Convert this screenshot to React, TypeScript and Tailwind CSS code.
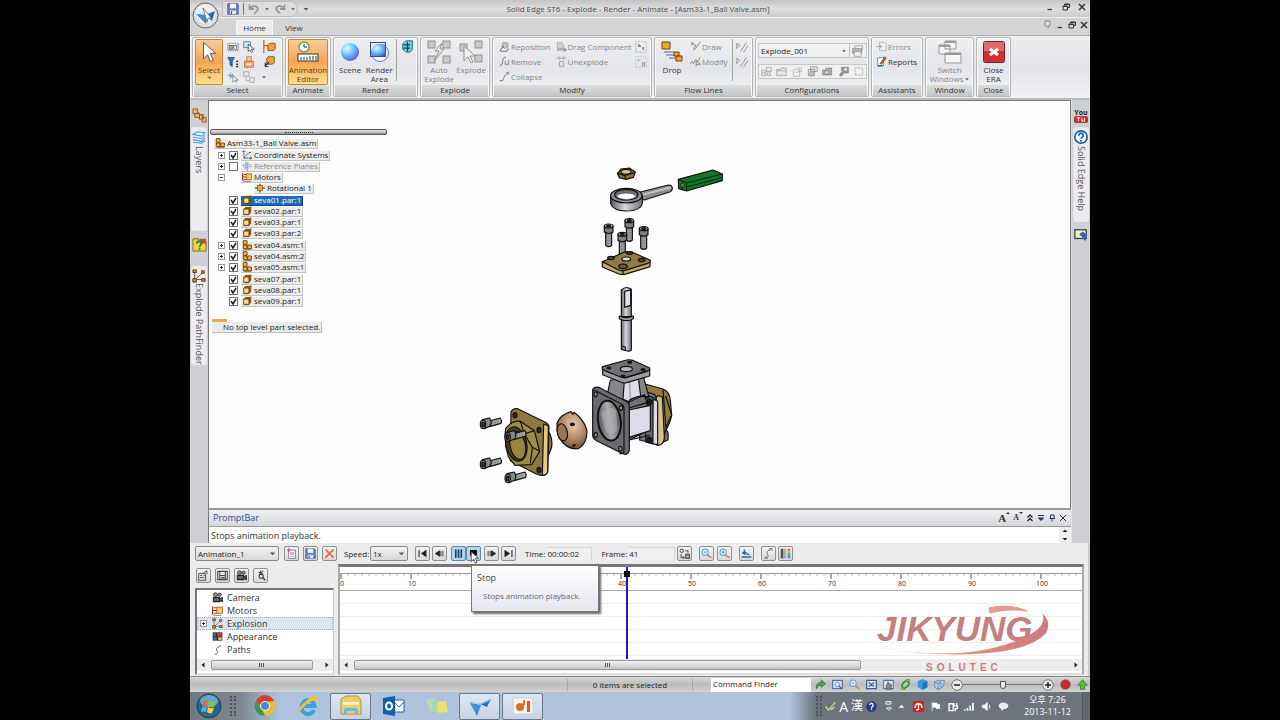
import type { ReactNode } from "react";

// Every small glyph is drawn on a 16x16 grid
function Icon({ size = 11, children }: { size?: number; children: ReactNode }) {
  return (
    <svg width={size} height={size} viewBox="0 0 16 16" fill="none" className="shrink-0" aria-hidden="true">
      {children}
    </svg>
  );
}

const icons: Record<string, ReactNode> = {
  arrow: <path d="M4 1v12l3-3 2 5 2-1-2-5h4z" fill="#fff" stroke="#444" />,
  selectBox: (
    <>
      <rect x="1" y="3" width="14" height="10" stroke="#3f74a8" strokeDasharray="2 1" />
      <rect x="3" y="6" width="4" height="5" fill="#e7a13d" stroke="#555" />
      <rect x="9" y="6" width="4" height="5" fill="#fff" stroke="#555" />
    </>
  ),
  selectArrow: (
    <>
      <rect x="1" y="1" width="9" height="8" fill="#cfe3f4" stroke="#39699a" />
      <path d="M7 4v10l2-2 2 3 2-1-2-3h4z" fill="#fff" stroke="#333" />
    </>
  ),
  relate: (
    <>
      <path d="M1 0v16M1 7h5" stroke="#d05a1c" strokeWidth="1.5" />
      <path d="M6 6l2-2h7v7l-2 2H6z" fill="#f0a437" stroke="#7a4a10" />
    </>
  ),
  filter: (
    <>
      <path d="M1 2h9L7 7v7l-3-2V7z" fill="#2c78b8" stroke="#1d4d78" />
      <path d="M12 7h3M12 11h3M12 14h3" stroke="#444" strokeWidth="2" />
    </>
  ),
  person: (
    <>
      <rect x="5" y="1" width="6" height="6" fill="#f8c6a0" stroke="#c4622b" />
      <rect x="2" y="7" width="12" height="8" fill="#f3a977" stroke="#c4622b" />
      <path d="M5 11h6" stroke="#fff" strokeWidth="2" />
    </>
  ),
  pin: (
    <>
      <path d="M5 3l2-2h8v8l-3 2H5z" fill="#f0a437" stroke="#5e3b10" />
      <path d="M8 8l-5 5M3 9v5h4" stroke="#333" strokeWidth="1.5" />
    </>
  ),
  move: (
    <>
      <path d="M1 6h8M5 2v8M3 4l5 5M3 10l5-6" stroke="#888" />
      <path d="M8 6v9l2-2 2 2 1-1-2-2h4z" fill="#f4f4f4" stroke="#777" />
    </>
  ),
  swap: (
    <>
      <rect x="1" y="1" width="7" height="6" fill="#e4e4e4" stroke="#999" />
      <rect x="9" y="9" width="6" height="6" fill="#e4e4e4" stroke="#999" />
      <path d="M4 9v4h4" stroke="#999" />
    </>
  ),
  caret: <path d="M3 6h10l-5 5z" fill="#555" />,
  motion: (
    <>
      <path d="M2 5l4-4h8v11l-3 3H6l-4-4z" fill="#6fd0d4" stroke="#145c63" />
      <path d="M3 6h8M3 10h8M8 2v12" stroke="#123f4c" strokeWidth="1.4" />
    </>
  ),
  reposition: (
    <>
      <path d="M6 2l7 1v6l-4 2-5-3z" fill="#c4c4c4" stroke="#8d8d8d" />
      <path d="M1 14l6-7M2 15h9l3-4" stroke="#777" strokeWidth="1.5" />
    </>
  ),
  remove: <path d="M1 15l4-4 1-7 4-3M9 7v5h5V6" stroke="#8a8a8a" strokeWidth="1.5" />,
  collapse: <path d="M1 14h4l4-8 3-1 2-4M10 2l5 2" stroke="#8a8a8a" strokeWidth="1.5" />,
  drag: (
    <>
      <path d="M2 2h6l3 4v5H2z" fill="#d2d2d2" stroke="#999" />
      <path d="M1 13h14M11 10l4 3-4 2" stroke="#888" strokeWidth="1.5" />
    </>
  ),
  unexplode: <path d="M1 3h6M9 3h6M4 1l3 2-3 2M12 1L9 3l3 2M5 8h6v7H5z" stroke="#8a8a8a" />,
  dashed: (
    <>
      <rect x="1" y="1" width="14" height="14" stroke="#999" strokeDasharray="2 1.5" />
      <path d="M5 4v3h3M11 12V8" stroke="#888" strokeWidth="2" />
    </>
  ),
  dashed2: (
    <>
      <rect x="1" y="1" width="14" height="14" stroke="#bbb" strokeDasharray="3 2" />
      <path d="M5 4v3M10 9h3v4h-3z" stroke="#999" strokeWidth="1.5" />
    </>
  ),
  draw: <path d="M1 3h3l2 3h3l-3 4v4M15 1l-6 9-2 1M2 7l3-5" stroke="#848484" strokeWidth="1.4" />,
  modify: <path d="M0 12l3-4 2 3 3-6 3 3 4-6M9 7v7l2-2h4z" stroke="#808080" strokeWidth="1.4" />,
  slashes: <path d="M1 3l4 3-4 4zM6 14l8-12M10 15l6-9" stroke="#949494" strokeWidth="1.3" />,
  errors: (
    <>
      <path d="M5 2h8l2 2v10H5z" fill="#eee" stroke="#aaa" />
      <path d="M0 8h7M5 6l3 2-3 2" stroke="#aaa" strokeWidth="1.5" />
    </>
  ),
  reports: (
    <>
      <path d="M2 3l9-1v12l-8 1z" fill="#fff" stroke="#356a9b" />
      <path d="M6 11L13 1l2 2-7 9z" fill="#e0713e" stroke="#333" />
      <path d="M2 14h8" stroke="#2573b3" strokeWidth="2" />
    </>
  ),
  printer: (
    <>
      <rect x="4" y="1" width="10" height="5" stroke="#999" fill="#eee" />
      <rect x="1" y="5" width="12" height="6" fill="#b5b5b5" stroke="#888" />
      <rect x="3" y="9" width="9" height="6" fill="#f4f4f4" stroke="#999" />
    </>
  ),
  cfgGrid: <path d="M1 6h6v8H1zM8 2h7v6H8zM9 10h5v4H9zM1 10h6" stroke="#999" fill="#e8e8e8" />,
  cfgFolder: <path d="M1 5h6l1-2h7v11H1zM1 7h14" stroke="#999" fill="#e4e4e4" />,
  cfgNew: <path d="M2 5h9v10H2zM8 3h6v5H9M5 9h4" stroke="#aaa" fill="#f1f1f1" />,
  cfgCopy: <path d="M5 1h10v7H5zM2 5h9v9H2zM4 10h5v4H4z" stroke="#888" fill="#ddd" />,
  cfgCam: (
    <>
      <path d="M1 6h4l1-3h8v10H1z" fill="#b0b0b0" stroke="#777" />
      <circle cx="7" cy="9" r="2.5" fill="#eee" stroke="#666" />
    </>
  ),
  cfgKey: (
    <>
      <path d="M5 2h10v8h-6l-4 5-3-2 4-5z" fill="#999" stroke="#777" />
      <circle cx="11" cy="5" r="2" fill="#eee" />
    </>
  ),
  cfgRect: <rect x="3" y="3" width="11" height="10" stroke="#999" strokeDasharray="3 1" />,
  floppy: (
    <>
      <path d="M1 1h13l1 2v12H1z" fill="#6f82c4" stroke="#3a4a8a" />
      <rect x="4" y="1" width="8" height="6" fill="#f2f4fb" />
      <rect x="4" y="10" width="8" height="5" fill="#dfe4f4" />
      <path d="M6 11v4" stroke="#3a4a8a" strokeWidth="1.5" />
    </>
  ),
  undo: <path d="M2 2v6h6M3 7c4-5 10-3 10 1 0 3-3 4-5 7" stroke="#979797" strokeWidth="2.4" />,
  redo: <path d="M14 2v6H8M13 7C9 2 3 4 3 8c0 3 3 3 5 6" stroke="#979797" strokeWidth="2.4" />,
  asm: (
    <>
      <path d="M2 1h6v6H2zM2 8h6v6H2zM9 8h6v6H9z" fill="#f6b64c" stroke="#6b3f08" strokeWidth="1.5" />
      <path d="M3 15h12" stroke="#6b3f08" />
    </>
  ),
  part: (
    <>
      <path d="M1 15l2-3M13 1h2v2" stroke="#c98a3a" />
      <path d="M3 5l3-3h8v8l-3 4H3z" fill="#8a560f" stroke="#5f3a08" />
      <rect x="3" y="5" width="8" height="8" fill="#ffe08a" stroke="#5f3a08" />
    </>
  ),
  coord: <path d="M3 1v12h12M3 13L11 4M1 3l2-2 2 2M11 4h3M13 11l3 2-3 2" stroke="#333" strokeWidth="1.4" strokeDasharray="3 1" />,
  plane: <path d="M6 1l3 2v12l-3-2zM1 7l10-2 4 3-10 3z" fill="#d8e8f6" stroke="#6a92b8" />,
  motor: (
    <>
      <path d="M1 2v12M1 8h6M3 4h4M3 12h4" stroke="#9a2c1c" strokeWidth="1.8" />
      <rect x="7" y="3" width="8" height="9" fill="#ffc65a" stroke="#8a4d12" />
      <path d="M2 15h12" stroke="#7d2f5a" />
    </>
  ),
  rotational: (
    <>
      <path d="M0 8h16M8 1v14" stroke="#6b3f08" strokeWidth="2" />
      <rect x="4" y="4" width="8" height="8" fill="#f2a93c" stroke="#6b3f08" />
    </>
  ),
  asmStack: (
    <>
      <path d="M1 1h5v5H1zM3 6h5v4H3zM8 7h4v5H8zM11 10h4v5h-4z" fill="#efbf68" stroke="#8a5a1a" />
      <path d="M6 4l6 6" stroke="#8a5a1a" />
    </>
  ),
  layers: <path d="M1 5l5-3 9 1-4 4zM1 8l10 2 4-4M1 11l10 2 4-4M1 14l10 1 4-3" stroke="#4c9bd6" fill="#eaf4fc" strokeWidth="1.2" />,
  folderHelp: (
    <>
      <path d="M1 2h6v3h8v10H1z" fill="#f0d33f" stroke="#7a6a20" />
      <rect x="8" y="2" width="7" height="5" fill="#c94a3b" />
      <path d="M5 7c0-3 5-3 5 0 0 2-2 2-2 4M8 12v2" stroke="#248a3c" strokeWidth="1.8" />
    </>
  ),
  explode: (
    <>
      <path d="M3 3v9h9M4 12l8-8" stroke="#555" />
      <path d="M1 1h4v3H1zM11 2h3v3h-3zM1 11h4v4H1zM11 11h4v3h-4z" fill="#e28a35" stroke="#5a2e0c" />
    </>
  ),
  youtube: (
    <>
      <text x="8" y="7" fontSize="8" fontWeight="bold" textAnchor="middle" fill="#222">You</text>
      <rect x="0" y="8" width="16" height="8" rx="2" fill="#c8312b" />
      <path d="M3 10h4M5 10v4M9 10v4h3v-4" stroke="#fff" />
    </>
  ),
  help: (
    <>
      <circle cx="8" cy="8" r="7" fill="#fff" stroke="#1f66ad" strokeWidth="2" />
      <path d="M5.5 6.5c0-4 5-3.5 5 0 0 2-2.5 1.5-2.5 3.5M8 11.5v2" stroke="#1f66ad" strokeWidth="2" />
    </>
  ),
  monitor: (
    <>
      <rect x="1" y="2" width="13" height="10" fill="#e9efc9" stroke="#444" strokeWidth="1.5" />
      <path d="M6 7l4-3 5 4-2 7-3-4z" fill="#2c6bb4" />
    </>
  ),
  newAnim: (
    <>
      <rect x="4" y="3" width="10" height="12" fill="#fff" stroke="#6a5a7d" />
      <path d="M6 7h6M6 9h6M6 12h6" stroke="#7060a0" />
      <path d="M1 3h6M4 0v6" stroke="#d46" strokeWidth="1.5" />
    </>
  ),
  redX: <path d="M2 2l12 12M14 2L2 14" stroke="#ea6b45" strokeWidth="2.6" />,
  first: <path d="M3 3v10M13 4L7 8l6 4z" fill="#222" stroke="#222" strokeWidth="1.5" />,
  prev: <path d="M8 4L2 8l6 4zM10 4v8M13 4v8" fill="#222" stroke="#222" strokeWidth="1.2" />,
  pause: <path d="M4 2v12M8 2v12M12 2v12" stroke="#153f6b" strokeWidth="2.4" />,
  stop: <rect x="3" y="3" width="10" height="8" fill="#000" />,
  next: <path d="M8 4l6 4-6 4zM6 4v8M3 4v8" fill="#222" stroke="#222" strokeWidth="1.2" />,
  last: <path d="M13 3v10M3 4l6 4-6 4z" fill="#222" stroke="#222" strokeWidth="1.5" />,
  props: <path d="M1 5h10v10H1zM8 4l5-3v5M3 8h3M3 11h6M8 8h2" stroke="#444" strokeWidth="1.3" />,
  film: <path d="M1 2h14v12H1zM4 2v12M12 2v12M4 8h8M7 11h3v3H7z" stroke="#444" strokeWidth="1.5" />,
  camera: (
    <>
      <circle cx="5" cy="4" r="3" fill="#888" stroke="#222" />
      <circle cx="11" cy="4" r="2.5" fill="#888" stroke="#222" />
      <path d="M2 8h9v6H2zM11 10l4-2v6l-4-2" fill="#666" stroke="#222" strokeWidth="1.5" />
    </>
  ),
  inspect: (
    <>
      <path d="M5 3l7 3M12 1L6 7M8 1v4" stroke="#444" strokeWidth="1.5" />
      <circle cx="9" cy="9" r="3" stroke="#444" strokeWidth="1.5" />
      <path d="M11 11l4 4" stroke="#444" strokeWidth="2" />
    </>
  ),
  appearance: (
    <>
      <rect x="1" y="2" width="14" height="12" fill="#222" />
      <path d="M2 3h4v5H2z" fill="#31843a" />
      <path d="M7 3h7v5H7z" fill="#d8362d" />
      <path d="M2 9h5v4H2z" fill="#5a5ad0" />
      <path d="M9 9h5v4H9z" fill="#e4cf3c" />
    </>
  ),
  path: <path d="M4 15c9-1 0-6 3-9 2-3 4-1 6-4" stroke="#555" strokeWidth="1.3" />,
  exportClip: (
    <>
      <circle cx="4" cy="4" r="2.5" stroke="#333" strokeWidth="1.3" />
      <path d="M9 4h4v3M3 9v5h4M6 12l2 2-2 2" stroke="#333" strokeWidth="1.3" />
      <path d="M10 9h5v6h-5z" stroke="#333" fill="#bbb" strokeWidth="1.5" />
    </>
  ),
  zoomOut: (
    <>
      <circle cx="6" cy="6" r="4.5" fill="#dff0ff" stroke="#5b9bd0" strokeWidth="1.5" />
      <path d="M4 6h4" stroke="#357" />
      <path d="M9 10l6 4" stroke="#d47b4a" strokeWidth="2.4" />
    </>
  ),
  zoomIn: (
    <>
      <circle cx="6" cy="6" r="4.5" fill="#dff0ff" stroke="#5b9bd0" strokeWidth="1.5" />
      <path d="M4 6h4M6 4v4" stroke="#357" />
      <path d="M9 10l6 4" stroke="#d47b4a" strokeWidth="2.4" />
    </>
  ),
  download: <path d="M1 13h14M5 2v6M2 6l3 3 3-3M8 9h4" stroke="#2f66a8" strokeWidth="2.2" />,
  curveS: <path d="M2 13c12 2 0-6 5-9 2-2 5-1 7-1M2 15h5M9 1h5" stroke="#666" strokeWidth="1.3" />,
  spectrum: (
    <>
      <rect x="1" y="1" width="4" height="14" fill="#555" />
      <rect x="5" y="1" width="4" height="14" fill="#aaa" />
      <path d="M11 1h4v3h-4z" fill="#e55" />
      <path d="M11 4h4v3h-4z" fill="#ea3" />
      <path d="M11 7h4v3h-4z" fill="#4b5" />
      <path d="M11 10h4v5h-4z" fill="#58d" />
    </>
  ),
  refresh: <path d="M2 14c-1-7 3-9 7-9V1l6 6-6 5V9c-3 0-5 1-7 5z" fill="#4aa84a" stroke="#1d5f2a" />,
  zoomArea: (
    <>
      <rect x="1" y="2" width="14" height="12" fill="#cfe2f6" stroke="#3468a8" strokeWidth="1.5" />
      <circle cx="8" cy="8" r="3" fill="#fff" stroke="#3468a8" />
      <path d="M10 10l4 4" stroke="#3468a8" strokeWidth="2" />
    </>
  ),
  fit: <path d="M1 2h14v12H1zM4 5l8 6M12 5l-8 6" stroke="#2c5c98" fill="#dce9f8" strokeWidth="1.7" />,
  pan: (
    <>
      <path d="M1 2h14v12H1z" stroke="#4a78ac" fill="#dce9f8" strokeWidth="1.5" />
      <path d="M5 15V8l2-1V4l2 3 3 1v7z" fill="#8c8c8c" stroke="#444" />
    </>
  ),
  rotate: (
    <>
      <ellipse cx="8" cy="8" rx="6" ry="4" stroke="#2a9a3a" strokeWidth="2.5" transform="rotate(-45 8 8)" />
      <path d="M9 0l5 1-2 4zM7 16l-5-1 2-4z" fill="#d7d23a" stroke="#3a7a1a" />
    </>
  ),
  blueCube: (
    <>
      <path d="M8 0l7 3v9l-7 4-7-4V3z" fill="#3e9ae2" />
      <path d="M8 6l7-3v9l-7 4z" fill="#1f74c0" />
    </>
  ),
  viewCube: <path d="M1 4l5-2 4 3v9l-4 1-5-3zM6 7v8M1 4l5 3 4-2M8 2h7l-1 8-4 3" stroke="#44719f" fill="#b5cfe8" />,
  up: <path d="M8 1l7 8h-4v6H5V9H1z" fill="#50c235" stroke="#1f7a18" />,
};

function G({ name, size }: { name: string; size?: number }) {
  return <Icon size={size}>{icons[name]}</Icon>;
}

function Group({ label, width, children }: { label: string; width: string; children: ReactNode }) {
  return (
    <section
      className={`${width} flex shrink-0 flex-col overflow-hidden rounded-xs border border-[#b4b5b7] bg-linear-to-b from-[#efeff0] via-[#e3e5e9] to-[#f3f3f4] shadow-[inset_0_0_0_1px_#fafafa]`}
    >
      <div className="flex min-h-0 flex-1 px-0.5 pt-px">{children}</div>
      <h2 className="mx-px h-[11px] shrink-0 bg-linear-to-b from-[#dcdddd] to-[#c4c5c6] text-center text-[8px] leading-[10px] text-[#333]">
        {label}
      </h2>
    </section>
  );
}

function SmallButton({ icon, label, muted = true }: { icon: string; label: string; muted?: boolean }) {
  return (
    <button
      className={`flex h-[15px] items-center gap-px whitespace-nowrap text-[8px] ${muted ? "text-[#868686]" : "text-[#333]"}`}
    >
      <G name={icon} />
      {label}
    </button>
  );
}

function IconButton({ icon, label, size = 12 }: { icon: string; label: string; size?: number }) {
  return (
    <button aria-label={label} className="grid h-[15px] w-4 place-items-center">
      <G name={icon} size={size} />
    </button>
  );
}

function BigButton({ label, children, className = "" }: { label: ReactNode; children: ReactNode; className?: string }) {
  return (
    <button className={`flex h-[46px] flex-col items-center rounded-xs text-center text-[8px] leading-[9px] ${className}`}>
      <span className="grid h-[26px] shrink-0 place-items-center">{children}</span>
      {label}
    </button>
  );
}

function QuickAccess() {
  return (
    <div className="ml-8 flex h-4 w-[76px] items-center gap-1 rounded-r-full border border-[#bdbdbd] bg-[#dedede] pl-1">
      <button aria-label="Save"><G name="floppy" size={12} /></button>
      <span className="h-3 w-px bg-[#777]" />
      <button aria-label="Undo"><G name="undo" size={12} /></button>
      <button aria-label="Undo list"><G name="caret" size={6} /></button>
      <button aria-label="Redo"><G name="redo" size={12} /></button>
      <button aria-label="Redo list"><G name="caret" size={6} /></button>
    </div>
  );
}

function WindowButtons() {
  return (
    <>
      <button aria-label="Minimize"><Icon size={8}><path d="M3 13h9" stroke="#333" strokeWidth="2.5" /></Icon></button>
      <button aria-label="Restore">
        <Icon size={8}><path d="M5 5V2h10v7h-4M2 6h9v8H2zM2 7h9M5 3h10" stroke="#333" strokeWidth="2" /></Icon>
      </button>
      <button aria-label="Close"><Icon size={8}><path d="M2 2l12 12M14 2L2 14" stroke="#333" strokeWidth="3" /></Icon></button>
    </>
  );
}

function TitleBar() {
  return (
    <header className="relative shrink-0 bg-[#d3d4d5]">
      <div className="flex h-[18px] items-center border-b border-[#f0f0f0] bg-linear-to-b from-[#c4c4c4] via-[#dedede] to-[#cccccc]">
        <div className="flex flex-1 items-center gap-1">
          <QuickAccess />
          <button aria-label="Customize toolbar"><G name="caret" size={8} /></button>
        </div>
        <h1 className="text-center text-[8px] text-[#4a4a4a]">
          Solid Edge ST6 - Explode - Render - Animate - [Asm33-1_Ball Valve.asm]
        </h1>
        <div className="flex flex-1 justify-end gap-2 pr-1 pb-1">
          <WindowButtons />
        </div>
      </div>
      <nav className="flex h-[17px] items-end pl-[46px] text-[8px] text-[#333]">
        <button className="h-[15px] w-[37px] rounded-t-xs border border-b-0 border-[#f8f8f8] bg-[#ececed]">Home</button>
        <button className="h-[15px] w-[42px]">View</button>
        <div className="mr-0.5 mb-1.5 ml-auto flex items-center gap-1">
          <button aria-label="Help">
            <Icon size={9}>
              <circle cx="8" cy="6" r="5" fill="#ddd" stroke="#999" strokeWidth="2" />
              <path d="M8 15l4-5" stroke="#999" strokeWidth="2" />
            </Icon>
          </button>
          <WindowButtons />
        </div>
      </nav>
      <button aria-label="Application menu" className="absolute top-0.5 left-0.5">
        <svg width="27" height="27" viewBox="0 0 27 27">
          <circle cx="13.5" cy="13.5" r="12.5" fill="#dcdddf" stroke="#666" />
          <circle cx="13.5" cy="12" r="10" fill="#f4f4f4" opacity=".8" />
          <path d="M4 12l12 1-2 9z" fill="#2f8fe0" />
          <path d="M13 13l10-4-3 10z" fill="#1d6cc0" />
          <path d="M11 6l9 11-4-1-1 4z" fill="#fff" stroke="#555" strokeWidth=".7" />
        </svg>
      </button>
    </header>
  );
}

function Ribbon() {
  return (
    <div className="flex h-[65px] shrink-0 gap-0.5 border-t border-[#a9aaac] bg-linear-to-b from-[#eeeeef] via-[#e2e4e8] to-[#f2f2f3] pt-px pb-[3px] pl-0.5 shadow-[inset_0_-2px_0_#b9babb]">
      <Group label="Select" width="w-[91px]">
        <BigButton
          className="w-7 bg-linear-to-b from-[#f8cd9c] via-[#f5a552] to-[#fde590] text-[#5a3a12] inset-ring inset-ring-[#c08a3a]"
          label={<>Select<G name="caret" size={7} /></>}
        >
          <Icon size={22}><path d="M4 1v12l3-3 2 5 2-1-2-5h4z" fill="#fff" stroke="#555" strokeWidth=".7" /></Icon>
        </BigButton>
        <div className="ml-0.5 grid h-[46px] grid-cols-2">
          <IconButton icon="selectBox" label="Box select" />
          <IconButton icon="selectArrow" label="Select tool" />
          <IconButton icon="filter" label="Filter" />
          <IconButton icon="person" label="Select component" />
          <IconButton icon="move" label="Move" />
          <IconButton icon="swap" label="Swap" />
        </div>
        <div className="flex flex-col pl-1">
          <IconButton icon="relate" label="Relate" size={13} />
          <IconButton icon="pin" label="Pin" />
          <button aria-label="More selection tools" className="flex h-[15px] items-center"><G name="caret" size={6} /></button>
        </div>
      </Group>
      <Group label="Animate" width="w-[46px]">
        <BigButton
          className="w-10 bg-linear-to-b from-[#f8cd9c] via-[#f5a552] to-[#fde590] text-[#5a3a12] inset-ring inset-ring-[#c08a3a]"
          label={<>Animation<br />Editor</>}
        >
          <svg width="22" height="22" viewBox="0 0 22 22" fill="none">
            <circle cx="7" cy="6" r="5" fill="#fff" stroke="#7d9a45" strokeWidth="1.5" />
            <path d="M7 3v3h3" stroke="#333" />
            <rect x="1" y="13" width="20" height="7" fill="#fff" stroke="#333" />
            <path d="M4 16v3M7 16v3M10 16v3M13 15v4M16 15v4M19 15v4" stroke="#245" />
          </svg>
        </BigButton>
      </Group>
      <Group label="Render" width="w-[85px]">
        <BigButton className="w-[29px] text-[#333]" label="Scene">
          <svg width="20" height="20" viewBox="0 0 20 20">
            <defs>
              <radialGradient id="sphere" cx=".35" cy=".3" r=".8">
                <stop offset="0" stopColor="#e8fbff" />
                <stop offset=".5" stopColor="#63bff5" />
                <stop offset="1" stopColor="#6a3fd0" />
              </radialGradient>
            </defs>
            <circle cx="10" cy="10" r="9" fill="url(#sphere)" />
          </svg>
        </BigButton>
        <BigButton className="w-[31px] text-[#333]" label={<>Render<br />Area</>}>
          <svg width="22" height="22" viewBox="0 0 22 22">
            <circle cx="12" cy="12" r="8.5" fill="#eef8ff" stroke="#5e7fd0" />
            <path d="M3.5 12a8.5 8.5 0 018.5-8.5h6V16H4.5z" fill="url(#sphere)" />
            <rect x="2.5" y="1.5" width="15" height="14" fill="none" stroke="#28588f" />
          </svg>
        </BigButton>
        <span className="mx-0.5 h-[42px] w-px bg-[#a5a5a5]" />
        <IconButton icon="motion" label="Motion" size={13} />
      </Group>
      <Group label="Explode" width="w-[70px]">
        <BigButton className="w-[33px] text-[#868686]" label={<>Auto<br />Explode</>}>
          <svg width="24" height="24" viewBox="0 0 24 24" fill="#c9c9c9" stroke="#909090">
            <rect x="1" y="1" width="7" height="7" /><rect x="16" y="1" width="7" height="7" />
            <rect x="1" y="16" width="7" height="7" /><rect x="16" y="16" width="7" height="7" />
            <path d="M15 3l-7 8h4l-4 9 9-11h-4z" fill="#eee" />
          </svg>
        </BigButton>
        <BigButton className="w-[33px] text-[#868686]" label="Explode">
          <svg width="24" height="24" viewBox="0 0 24 24" fill="#c9c9c9" stroke="#909090">
            <rect x="1" y="4" width="7" height="7" /><rect x="16" y="1" width="7" height="7" />
            <rect x="16" y="15" width="7" height="7" />
            <path d="M5 6v15l4-4 3 6 2-1-3-6h5z" fill="#f4f4f4" />
          </svg>
        </BigButton>
      </Group>
      <Group label="Modify" width="w-[160px]">
        <div className="flex w-[59px] flex-col pl-1">
          <SmallButton icon="reposition" label="Reposition" />
          <SmallButton icon="remove" label="Remove" />
          <SmallButton icon="collapse" label="Collapse" />
        </div>
        <div className="ml-0.5 w-[78px]">
          <SmallButton icon="drag" label="Drag Component" />
          <SmallButton icon="unexplode" label="Unexplode" />
        </div>
        <div>
          <IconButton icon="dashed" label="Select all" />
          <IconButton icon="dashed2" label="Clear" />
        </div>
      </Group>
      <Group label="Flow Lines" width="w-[99px]">
        <BigButton className="w-[30px] text-[#333]" label="Drop">
          <svg width="22" height="24" viewBox="0 0 22 24">
            <path d="M3 12h10M5 15h10M8 18h10" stroke="#5a62a8" />
            <path d="M1 2h8v7H1zM13 12h5v4h-5zM15 16h6v5h-6z" fill="#f2a52c" stroke="#6b420c" />
          </svg>
        </BigButton>
        <div className="ml-[3px] w-[42px]">
          <SmallButton icon="draw" label="Draw" />
          <SmallButton icon="modify" label="Modify" />
        </div>
        <span className="h-[42px] w-px bg-[#a5a5a5]" />
        <div className="ml-px">
          <IconButton icon="slashes" label="Show line" />
          <IconButton icon="slashes" label="Hide line" />
        </div>
      </Group>
      <Group label="Configurations" width="w-[114px]">
        <div className="flex flex-col gap-1.5 pt-1">
          <div className="flex h-[15px] items-center border border-[#c4c5c7] bg-[#f0f0f1]">
            <SelectBox label="Configuration" value="Explode_001" width="w-[90px]" flat />
            <span className="h-full w-px bg-[#c4c5c7]" />
            <IconButton icon="printer" label="Configuration manager" />
          </div>
          <div className="flex h-[15px] w-[109px] items-center justify-between border border-[#c4c5c7] bg-[#f0f0f1]">
            {["cfgGrid", "cfgFolder", "cfgNew", "cfgCopy", "cfgCam", "cfgKey", "cfgRect"].map((name) => (
              <button key={name} aria-label={name.slice(3)} className="grid w-[15px] place-items-center">
                <G name={name} />
              </button>
            ))}
          </div>
        </div>
      </Group>
      <Group label="Assistants" width="w-[52px]">
        <div className="pl-0.5">
          <SmallButton icon="errors" label="Errors" />
          <SmallButton icon="reports" label="Reports" muted={false} />
        </div>
      </Group>
      <Group label="Window" width="w-[49px]">
        <BigButton
          className="w-full text-[#868686]"
          label={<>Switch<span className="flex items-center">Windows<G name="caret" size={6} /></span></>}
        >
          <svg width="24" height="24" viewBox="0 0 24 24" fill="#f4f4f4" stroke="#999">
            <path d="M7 1h11v8H7zM1 5h11v9H1zM7 13h16v10H7z" />
            <path d="M7 2h11M1 6h11M7 14h16" strokeWidth="2" />
          </svg>
        </BigButton>
      </Group>
      <Group label="Close" width="w-[35px]">
        <BigButton className="w-full text-[#333]" label={<>Close<br />ERA</>}>
          <svg width="22" height="22" viewBox="0 0 22 22">
            <rect x=".5" y=".5" width="21" height="21" rx="2" fill="#cf3038" stroke="#7c2024" />
            <path d="M1 1h20v9H1z" fill="#dd6a6c" />
            <path d="M7 8l8 6M15 8l-8 6" stroke="#fff" strokeWidth="3" />
          </svg>
        </BigButton>
      </Group>
    </div>
  );
}

function SelectBox({ label, value, width, flat = false }: { label: string; value: string; width: string; flat?: boolean }) {
  return (
    <span className={`${width} inline-grid items-center`}>
      <select
        aria-label={label}
        className={`col-start-1 row-start-1 h-[15px] w-full appearance-none pl-0.5 text-[8px] leading-3 text-[#222] ${
          flat ? "bg-transparent" : "rounded-xs border border-[#8a8a8a] bg-linear-to-b from-[#f4f4f4] to-[#d8d8d8]"
        }`}
      >
        <option>{value}</option>
      </select>
      <span className="pointer-events-none col-start-1 row-start-1 mr-0.5 justify-self-end">
        <G name="caret" size={flat ? 6 : 9} />
      </span>
    </span>
  );
}

function LeftRail() {
  return (
    <aside className="flex w-[19px] shrink-0 flex-col items-center border-r border-[#777] bg-[#cfd0d3] text-[9px] text-[#555]">
      <button aria-label="Assembly PathFinder" className="mt-1 h-[23px]"><G name="asmStack" size={15} /></button>
      <button className="flex h-[104px] w-4 flex-col items-center gap-0.5 rounded-xs border border-[#e6e6e8] bg-[#ececee] pt-0.5">
        <G name="layers" size={14} />
        <span className="[writing-mode:vertical-rl]">Layers</span>
      </button>
      <button aria-label="Parts library" className="flex h-[35px] items-start pt-1.5"><G name="folderHelp" size={15} /></button>
      <button className="flex h-[99px] w-4 flex-col items-center rounded-xs border border-[#e6e6e8] bg-[#ececee] pt-0.5">
        <G name="explode" size={14} />
        <span className="whitespace-nowrap [writing-mode:vertical-rl]">Explode PathFinder</span>
      </button>
    </aside>
  );
}

function RightRail() {
  return (
    <aside className="flex w-[19px] shrink-0 flex-col items-center border-l border-[#e4e4e6] bg-[#cfd0d3] text-[9px] text-[#555]">
      <button aria-label="YouTube" className="mt-1 h-[23px]"><G name="youtube" size={14} /></button>
      <button className="flex h-[95px] w-4 flex-col items-center gap-0.5 rounded-xs border border-[#e6e6e8] bg-[#ececee] pt-0.5">
        <G name="help" size={14} />
        <span className="whitespace-nowrap [writing-mode:vertical-rl]">Solid Edge Help</span>
      </button>
      <button aria-label="Gallery" className="mt-1.5"><G name="monitor" size={14} /></button>
    </aside>
  );
}

type Node = {
  label: string;
  icon: string;
  level?: number;
  expand?: "+" | "-";
  check?: boolean;
  selected?: boolean;
  muted?: boolean;
};

const tree: Node[][] = [
  [{ label: "Asm33-1_Ball Valve.asm", icon: "asm", level: 0 }],
  [
    { label: "Coordinate Systems", icon: "coord", expand: "+", check: true },
    { label: "Reference Planes", icon: "plane", expand: "+", check: false, muted: true },
    { label: "Motors", icon: "motor", expand: "-" },
    { label: "Rotational 1", icon: "rotational", level: 2 },
  ],
  [
    { label: "seva01.par:1", icon: "part", check: true, selected: true },
    { label: "seva02.par:1", icon: "part", check: true },
    { label: "seva03.par:1", icon: "part", check: true },
    { label: "seva03.par:2", icon: "part", check: true },
  ],
  [
    { label: "seva04.asm:1", icon: "asm", expand: "+", check: true },
    { label: "seva04.asm:2", icon: "asm", expand: "+", check: true },
    { label: "seva05.asm:1", icon: "asm", expand: "+", check: true },
  ],
  [
    { label: "seva07.par:1", icon: "part", check: true },
    { label: "seva08.par:1", icon: "part", check: true },
    { label: "seva09.par:1", icon: "part", check: true },
  ],
];

function Expander({ sign }: { sign: string }) {
  return (
    <button aria-label={sign === "+" ? "Expand" : "Collapse"} className="grid size-[7px] place-items-center border border-[#999] bg-white">
      <svg width="5" height="5" viewBox="0 0 5 5" stroke="#333" fill="none">
        <path d={sign === "+" ? "M1 2.5h3M2.5 1v3" : "M1 2.5h3"} />
      </svg>
    </button>
  );
}

function TreeRow({ node }: { node: Node }) {
  const { label, icon, level = 1, expand, check, selected, muted } = node;
  return (
    <li className="flex h-[11px] items-center">
      {level > 0 && (
        <>
          <span className="ml-2 w-[11px]">{expand && <Expander sign={expand} />}</span>
          <span className="grid w-3 items-center">
            {check !== undefined && (
              <>
                <input
                  type="checkbox"
                  defaultChecked={check}
                  aria-label={`Show ${label}`}
                  className="peer col-start-1 row-start-1 size-[9px] appearance-none border border-[#678] bg-white"
                />
                <svg className="pointer-events-none invisible col-start-1 row-start-1 peer-checked:visible" width="9" height="9" viewBox="0 0 9 9" fill="none">
                  <path d="M2 4l2 3 3-5" stroke="#222" strokeWidth="1.5" />
                </svg>
              </>
            )}
          </span>
        </>
      )}
      <span
        className={`flex h-[10px] items-center gap-0.5 border-r border-b pr-px pl-px whitespace-nowrap ${level === 0 ? "ml-1" : ""} ${level === 2 ? "ml-[13px]" : ""} ${
          selected ? "border-[#0c4a86] bg-[#1c6cb8] text-white" : "border-[#c4c4c4] bg-[#ececed]"
        } ${muted ? "text-[#888]" : ""}`}
      >
        <G name={icon} size={10} />
        {label}
      </span>
    </li>
  );
}

function PathFinder() {
  return (
    <div className="mt-7 w-[178px] shrink-0 text-[8px] leading-[10px] text-[#222]">
      <div className="flex h-1.5 w-[177px] items-center justify-center rounded-xs border border-[#555] bg-linear-to-b from-[#eee] to-[#999]">
        <span className="w-7 border-t border-dotted border-[#333]" />
      </div>
      <div className="mt-[3px] flex flex-col gap-px">
        {tree.map((rows) => (
          <ul key={rows[0].label}>
            {rows.map((node) => (
              <TreeRow key={node.label} node={node} />
            ))}
          </ul>
        ))}
      </div>
      <div className="mt-3 ml-0.5 h-[3px] w-[15px] bg-[#f3a950]" />
      <p className="ml-0.5 h-[11px] w-fit border-r border-b border-[#bbb] bg-[#ececed] pr-px pl-[11px] whitespace-nowrap">
        No top level part selected.
      </p>
    </div>
  );
}

// Socket head screw standing upright
function UprightScrew({ x, y }: { x: number; y: number }) {
  return (
    <g transform={`translate(${x} ${y})`}>
      <path d="M-9 16h18v42q-9 8-18 0z" fill="#9a9da0" />
      <path d="M-9 28h18M-9 36h18M-9 44h18M-9 52h18" strokeWidth="1" stroke="#555" />
      <path d="M-13 0v18q13 9 26 0V0z" fill="#7c7f82" />
      <ellipse rx="13" ry="6" fill="#b5b8ba" />
      <ellipse rx="6" ry="3" fill="#333" />
    </g>
  );
}

function SideScrew({ x, y }: { x: number; y: number }) {
  return (
    <g transform={`translate(${x} ${y})`}>
      <path d="M18-8l34-9q6 8 2 16L20 9z" fill="#a3a5a7" />
      <path d="M28-9l3 15M35-11l3 15M42-13l3 15" strokeWidth="1" stroke="#555" />
      <path d="M-2-12l22-5q8 12 2 24L4 15z" fill="#85888b" />
      <ellipse cx="0" cy="2" rx="8" ry="13" fill="#9a9da0" />
      <ellipse cx="0" cy="2" rx="4" ry="7" fill="#444" />
    </g>
  );
}

function BallValve() {
  return (
    <svg className="mt-[59px] ml-[81px] h-[330px] w-[270px]" viewBox="0 0 810 990" role="img" aria-label="Exploded ball valve assembly">
      <defs>
        <linearGradient id="steel">
          <stop offset="0" stopColor="#55585b" />
          <stop offset=".45" stopColor="#d8d9e0" />
          <stop offset="1" stopColor="#707376" />
        </linearGradient>
        <radialGradient id="bronze" cx=".55" cy=".35" r=".7">
          <stop offset="0" stopColor="#e8cdb4" />
          <stop offset=".5" stopColor="#b88f6c" />
          <stop offset="1" stopColor="#6d4a30" />
        </radialGradient>
        <linearGradient id="bore">
          <stop offset="0" stopColor="#55585a" />
          <stop offset=".5" stopColor="#a9abad" />
          <stop offset="1" stopColor="#5a5d5f" />
        </linearGradient>
      </defs>

      {/* handle, nut, cover screws and cover plate */}
      <g transform="translate(330 -30)" stroke="#111" strokeWidth="3.5" strokeLinejoin="round">
        <path d="M115 70l12-13 24-3 18 12-6 16-22 6-20-5z" fill="#8f7140" />
        <path d="M115 70l22 6 4 12M137 76l30-8" fill="none" />
        <ellipse cx="141" cy="65" rx="15" ry="7" fill="#d8c59a" />
        <path d="M184 126l84-21q12 0 12 10 0 8-8 11l-76 24-14-4z" fill="#8b8e90" />
        <path d="M192 134l84-22" stroke="#c4c6c8" strokeWidth="5" />
        <path d="M95 137v24q8 22 46 22 44 0 49-24v-24z" fill="url(#steel)" />
        <ellipse cx="142" cy="137" rx="47" ry="22" fill="#8d9093" />
        <ellipse cx="142" cy="134" rx="35" ry="16" fill="#6c7072" />
        <path d="M111 139q10-10 31-10t31 10q-12 10-31 10t-31-10z" fill="#fff" strokeWidth="1.5" />
        <path d="M298 88l104-28 28 12v20l-107 31-24-7z" fill="#147526" />
        <path d="M298 88l25 11 107-27M323 99v24M310 94v25M324 111l104-28" fill="none" strokeWidth="2.5" />
        <circle cx="311" cy="105" r="6" fill="#2a9d3e" strokeWidth="2" />
        <UprightScrew x={151} y={212} />
        <UprightScrew x={89} y={228} />
        <UprightScrew x={194} y={236} />
        <UprightScrew x={130} y={253} />
        <path d="M70 335v16l52 22h15l76-23v-19l-9 10-74 20z" fill="#c7aa62" />
        <path d="M70 335l65-28q10-4 23-1l55 24q3 6-4 9l-70 22q-9 4-20-1z" fill="#917a48" />
        <path d="M132 361v12" />
        <ellipse cx="142" cy="327" rx="13" ry="6" fill="#eadfbd" />
        <ellipse cx="96" cy="324" rx="10" ry="5" fill="#5a4a28" />
        <ellipse cx="188" cy="330" rx="10" ry="5" fill="#5a4a28" />
        <ellipse cx="132" cy="349" rx="13" ry="7" fill="#6a5732" />
        <ellipse cx="152" cy="309" rx="9" ry="4" fill="#5a4a28" />
      </g>

      {/* stem, body, ball and end flange */}
      <g transform="translate(0 360)" stroke="#111" strokeWidth="3.5" strokeLinejoin="round">
        <path d="M457 30q14-14 30-2v82h-30z" fill="url(#steel)" />
        <path d="M467 34l18-4v46l-18 6z" fill="#dedfe8" />
        <path d="M457 116h30v94q-6 5-12 3l-18-5z" fill="url(#steel)" />
        <path d="M457 198l12 3v11" fill="none" />
        <path d="M451 108q20 10 42 0v8q-20 12-42 0z" fill="#9da0a3" />

        {/* far flange */}
        <path d="M528 312l54 15q20 8 22 34l4 46q-8 34-28 60l-42 18z" fill="#927c3d" />
        <path d="M582 329l10 130M590 348l18 56M592 440l14-32" fill="none" />
        <path d="M590 450q10 0 7 30l-14 6z" fill="#777" />
        <path d="M514 330l44 14 4 148-50-12z" fill="#7d8083" />
        <path d="M562 350q8-6 18 2l6 120q0 14-10 22l-12 2z" fill="#d4c286" />
        <path d="M552 358l14 6v130l-20-4z" fill="#dcdce8" />
        <path d="M528 344l24 8v140l-22-6z" fill="#66696c" />
        <ellipse cx="541" cy="366" rx="7" ry="9" fill="#222" />
        <ellipse cx="541" cy="480" rx="7" ry="8" fill="#222" />

        {/* body */}
        <path d="M424 300l-10 48 60 24 66-20-16-60z" fill="#85888b" />
        <path d="M466 300l-4 58q28 16 54-2l-8-62z" fill="#dddde8" />
        <path d="M482 304l2 52" stroke="#b0b1ba" strokeWidth="6" />
        <path d="M480 366l46-22 8 26v84l-54 26z" fill="#6f7275" />
        <path d="M480 390l64-14v76l-64 20z" fill="#dcdce8" />
        <path d="M480 384l66-20M480 480l62-14" fill="none" />
        <path d="M480 362q30-20 60-10" fill="none" strokeWidth="5" />
        <path d="M401 262v22l60 24q8 2 12 0l69-20v-20l-8 6-66 20-60-22z" fill="#999ca0" />
        <path d="M401 260l72-20q10-2 18 1l50 22q4 6-4 9l-66 20q-8 2-16-1l-52-21q-6-5-2-10z" fill="#707376" />
        <ellipse cx="472" cy="267" rx="18" ry="8" fill="#b2b4b6" />
        <ellipse cx="420" cy="264" rx="6" ry="3" fill="#222" />
        <ellipse cx="482" cy="247" rx="6" ry="3" fill="#222" />
        <ellipse cx="522" cy="269" rx="6" ry="3" fill="#222" />
        <ellipse cx="462" cy="288" rx="6" ry="3" fill="#222" />
        <path d="M371 328q6-8 18-6l86 44q6 6 6 14v132q-6 14-18 10l-80-40q-12-6-12-16z" fill="#686b6e" />
        <path d="M371 334q6-5 12 0l74 38q8 4 8 14v126q-2 12-14 8" fill="none" />
        <ellipse cx="421" cy="422" rx="34" ry="60" fill="url(#bore)" strokeWidth="6" transform="rotate(-8 421 422)" />
        <path d="M396 400q28-26 46-10l2 60q-20 22-34 4z" fill="#b4b5b8" stroke="none" opacity=".5" />
        <ellipse cx="380" cy="343" rx="5" ry="7" fill="#999" />
        <ellipse cx="456" cy="384" rx="5" ry="7" fill="#999" />
        <ellipse cx="380" cy="465" rx="5" ry="7" fill="#999" />
        <ellipse cx="454" cy="506" rx="5" ry="7" fill="#999" />

        {/* ball */}
        <path d="M264 430q10-26 42-35l6 8 4-6 12 11q20 20 26 44 0 40-26 54-36 4-58-34-8-20-6-42z" fill="url(#bronze)" />
        <ellipse cx="280" cy="457" rx="15" ry="26" fill="#9b7456" transform="rotate(-12 280 457)" />
        <ellipse cx="310" cy="433" rx="6" ry="4" fill="#222" />
        <path d="M310 497l10-2" strokeWidth="6" />

        {/* near flange */}
        <path d="M236 450q16 22 12 52l-12 30z" fill="#8a7538" />
        <path d="M126 396q6-12 20-10l86 42q8 6 8 14l-4 132q-6 14-20 12l-14-4-78-40z" fill="#8d793f" />
        <path d="M224 432l14 6-2 138q-6 12-16 10z" fill="#dfcb84" />
        <path d="M110 446q20-26 44-22l42 28 16 62-24 40-50 2-20-26q-14-42-8-84z" fill="#a08c4a" />
        <path d="M154 424l12 38 24 40-6 48M196 452l-30 10M212 514l-22-12M166 462l-40-20" fill="none" />
        <ellipse cx="142" cy="492" rx="31" ry="52" fill="#4b3f1e" transform="rotate(-12 142 492)" />
        <ellipse cx="146" cy="496" rx="23" ry="43" fill="#9a8442" transform="rotate(-12 146 496)" />
        <ellipse cx="138" cy="406" rx="6" ry="8" fill="#332a12" />
        <ellipse cx="210" cy="450" rx="6" ry="8" fill="#332a12" />
        <ellipse cx="210" cy="570" rx="6" ry="8" fill="#332a12" />
        <SideScrew x={116} y={469} />
        <SideScrew x={42} y={431} />
        <SideScrew x={42} y={551} />
        <SideScrew x={116} y={593} />
      </g>
    </svg>
  );
}

function PromptBar() {
  return (
    <section className="shrink-0 text-[#333]">
      <div className="flex h-[19px] items-center border-t-2 border-b border-[#999] bg-linear-to-b from-[#f0f0f2] to-[#d6d7db] px-1">
        <h2 className="text-[9px] leading-3 text-[#2b5080]">PromptBar</h2>
        <div className="ml-auto flex items-center gap-[3px]">
          <button aria-label="Larger text" className="flex font-['Liberation_Serif',serif] text-[11px] leading-3 font-bold">
            A
            <Icon size={4}><path d="M0 8l8-8 8 8z" fill="#1d355e" /></Icon>
          </button>
          <button aria-label="Smaller text" className="flex font-['Liberation_Serif',serif] text-[8px] leading-3 font-bold">
            A
            <Icon size={4}><path d="M0 0h16L8 8z" fill="#1d355e" /></Icon>
          </button>
          <button aria-label="Collapse"><Icon size={8}><path d="M3 7l5-5 5 5M3 14l5-5 5 5" stroke="#222" strokeWidth="2.5" /></Icon></button>
          <button aria-label="Options"><Icon size={8}><path d="M2 3h12M3 8h10l-5 5z" fill="#1d355e" stroke="#1d355e" strokeWidth="2" /></Icon></button>
          <button aria-label="Auto hide"><Icon size={8}><path d="M5 2h7v7H5zM3 9h11M8 9v6" stroke="#1d355e" strokeWidth="2" /></Icon></button>
          <button aria-label="Close prompt bar"><Icon size={8}><path d="M2 2l12 12M14 2L2 14" stroke="#1d355e" strokeWidth="2" /></Icon></button>
        </div>
      </div>
      <div className="flex h-4 bg-white">
        <p className="flex-1 pl-0.5 text-[9px] leading-[18px]">Stops animation playback.</p>
        <div className="flex w-3 flex-col items-center bg-[#eee]">
          <button aria-label="Scroll up"><Icon size={8}><path d="M3 10h10L8 5z" fill="#222" /></Icon></button>
          <button aria-label="Scroll down"><Icon size={8}><path d="M3 6h10l-5 5z" fill="#222" /></Icon></button>
        </div>
      </div>
    </section>
  );
}

function ToolButton({ icon, label, active = false }: { icon: string; label: string; active?: boolean }) {
  return (
    <button
      aria-label={label}
      className={`grid size-[15px] shrink-0 place-items-center rounded-xs border ${
        active ? "border-[#5d8ba8] bg-[#b5d6ea]" : "border-[#8f8f8f] bg-linear-to-b from-[#f4f4f4] to-[#d9d9d9]"
      }`}
    >
      <G name={icon} />
    </button>
  );
}

function AnimationToolbar() {
  return (
    <div className="flex h-[21px] items-center pl-[5px] text-[8px] text-[#222]">
      <SelectBox label="Animation" value="Animation_1" width="w-[84px]" />
      <div className="ml-[5px] flex gap-1">
        <ToolButton icon="newAnim" label="New animation" />
        <ToolButton icon="floppy" label="Save animation" />
        <ToolButton icon="redX" label="Delete animation" />
      </div>
      <span className="ml-[7px] w-[26px]">Speed:</span>
      <SelectBox label="Speed" value="1x" width="w-[38px]" />
      <div className="ml-[7px] flex gap-0.5">
        <ToolButton icon="first" label="Go to start" />
        <ToolButton icon="prev" label="Previous frame" />
      </div>
      <div className="relative ml-1 flex">
        <ToolButton icon="pause" label="Pause" active />
        <ToolButton icon="stop" label="Stop" active />
        <div role="tooltip" className="absolute top-[19px] left-5 z-10 h-[47px] w-32 border border-[#777] bg-linear-to-b from-white to-[#e6e6f0] shadow-[2px_2px_2px_#666]">
          <p className="pt-1.5 pl-[5px] text-[9px] leading-3 text-[#444]">Stop</p>
          <p className="pt-1.5 pl-[11px] text-[8px] leading-3 whitespace-nowrap text-[#666]">Stops animation playback.</p>
        </div>
        <span className="absolute top-[5px] left-[17px] z-20"><G name="arrow" size={13} /></span>
      </div>
      <div className="ml-[3px] flex gap-0.5">
        <ToolButton icon="next" label="Next frame" />
        <ToolButton icon="last" label="Go to end" />
      </div>
      <label className="ml-[9px] flex items-center gap-0.5">
        Time:
        <input readOnly value="00:00:02" className="h-3.5 w-[45px] border-t border-r border-[#d6d6d6] bg-[#f0f0f0] pb-px" />
      </label>
      <label className="ml-[9px] flex items-center gap-0.5">
        Frame:
        <input readOnly value="41" className="h-3.5 w-[46px] border-t border-r border-[#d6d6d6] bg-[#f0f0f0] pb-px" />
      </label>
      <div className="ml-0.5 flex gap-[7px]">
        <ToolButton icon="exportClip" label="Export clip" />
        <div className="flex gap-[3px]">
          <ToolButton icon="zoomOut" label="Zoom out" />
          <ToolButton icon="zoomIn" label="Zoom in" />
        </div>
        <ToolButton icon="download" label="Insert frames" />
        <div className="flex gap-0.5">
          <ToolButton icon="curveS" label="Show path" />
          <ToolButton icon="spectrum" label="Color key" />
        </div>
      </div>
    </div>
  );
}

function ScrollBar({ thumb }: { thumb: string }) {
  return (
    <div className="mb-0.5 flex h-3 items-center gap-1 bg-[#ededed] px-0.5">
      <button aria-label="Scroll left"><Icon size={8}><path d="M11 3v10L5 8z" fill="#222" /></Icon></button>
      <div className="flex flex-1">
        <div className={`${thumb} flex h-2.5 items-center justify-center gap-px rounded-xs border border-[#999] bg-linear-to-b from-[#f2f2f2] to-[#c4c4c4]`}>
          <span className="h-1 w-px bg-[#555]" />
          <span className="h-1 w-px bg-[#555]" />
          <span className="h-1 w-px bg-[#555]" />
        </div>
      </div>
      <button aria-label="Scroll right"><Icon size={8}><path d="M5 3v10l6-5z" fill="#222" /></Icon></button>
    </div>
  );
}

const tracks = [
  { label: "Camera", icon: "camera" },
  { label: "Motors", icon: "motor" },
  { label: "Explosion", icon: "explode" },
  { label: "Appearance", icon: "appearance" },
  { label: "Paths", icon: "path" },
];

function TrackList() {
  return (
    <div className="mt-[5px] flex flex-1 flex-col border-2 border-r border-[#777] border-r-[#ccc] border-b-[#ddd] bg-white">
      <ul className="flex-1 pt-px text-[9px] leading-3 text-[#333]">
        {tracks.map(({ label, icon }) => (
          <li
            key={label}
            className={`flex h-[13px] items-center ${label === "Explosion" ? "bg-[#dde6ef] outline outline-dotted -outline-offset-1 outline-[#9ab]" : ""}`}
          >
            <span className="flex w-[15px] pl-[3px]">{label === "Explosion" && <Expander sign="+" />}</span>
            <span className="w-[15px]"><G name={icon} size={11} /></span>
            {label}
          </li>
        ))}
      </ul>
      <ScrollBar thumb="w-[94%]" />
    </div>
  );
}

const frameWidth = 7;

function Timeline() {
  const frames = Array.from({ length: 106 }, (_, i) => i);
  return (
    <div className="relative flex flex-1 flex-col overflow-hidden border-2 border-t-[3px] border-[#aaa] border-t-[#777] border-b-[#ddd] bg-white">
      <svg className="h-6 w-full shrink-0" role="img" aria-label="Frame ruler">
        <path d="M0 6.5h2000" stroke="#999" />
        <path d="M0 23.5h2000" stroke="#aaa" />
        {frames.map((f) => (
          <line key={f} x1={f * frameWidth + 1} x2={f * frameWidth + 1} y1="7" y2={f % 10 === 0 ? 12 : 9} stroke={f % 10 === 0 ? "#555" : "#bbb"} />
        ))}
        {frames.filter((f) => f % 10 === 0).map((f) => (
          <text key={f} x={f * frameWidth + 2} y="19" fontSize="7" textAnchor="middle" fill="#333">{f}</text>
        ))}
      </svg>
      <div className="flex-1">
        {tracks.map(({ label }) => (
          <div key={label} className="h-[13px] border-b border-[#eee]" />
        ))}
      </div>
      <ScrollBar thumb="w-[71%]" />
      {/* playhead */}
      <div className="absolute top-0 bottom-3.5 w-0.5 bg-[#2020b8]" style={{ left: 41 * frameWidth - 1 }}>
        <span className="relative -left-0.5 mt-1 block size-1.5 bg-black" />
      </div>
      <svg className="absolute right-[26px] bottom-0 h-[68px] w-[180px]" viewBox="0 0 180 68" role="img" aria-label="Jikyung Solutec">
        <defs>
          <linearGradient id="swoosh">
            <stop offset="0" stopColor="#f0c86c" />
            <stop offset=".35" stopColor="#e09a80" />
            <stop offset="1" stopColor="#cb7c7c" />
          </linearGradient>
        </defs>
        <g fill="#c47f80" fontFamily="Liberation Sans, sans-serif" fontWeight="bold">
          <text x="1" y="36" fontSize="35" fontStyle="italic">JIKYUNG</text>
          <text x="50" y="66" fontSize="10" className="tracking-[4px]">SOLUTEC</text>
        </g>
        <path d="M4 42q60 12 109 2 50-12 54-28 1-4-1-8 10 9 4 20-14 16-57 20-58 5-109-6z" fill="url(#swoosh)" />
        <path d="M113 3q20-5 38 3-18-3-37 2z" fill="#e09a90" stroke="#e09a90" />
      </svg>
    </div>
  );
}

function StatusBar() {
  const tools = ["refresh", "zoomArea", "zoomOut", "fit", "pan", "rotate", "blueCube", "viewCube"];
  return (
    <footer className="flex h-4 shrink-0 items-center border-t border-[#888] bg-linear-to-b from-[#d8d8d8] via-[#bcbcbc] to-[#d2d2d2] text-[8px] text-[#222]">
      <div className="flex-1" />
      <p className="w-[126px] border-x border-[#aaa] text-center">0 items are selected</p>
      <span className="w-[18px]" />
      <input aria-label="Command Finder" defaultValue="Command Finder" className="h-3.5 w-[100px] bg-white pb-0.5 pl-0.5" />
      <div className="ml-1 flex gap-1.5">
        {tools.map((name) => (
          <button key={name} aria-label={name}><G name={name} /></button>
        ))}
      </div>
      <button aria-label="Zoom out" className="ml-1.5">
        <Icon size={12}><circle cx="8" cy="8" r="7" fill="#eee" stroke="#555" /><path d="M4 8h8" stroke="#222" strokeWidth="2" /></Icon>
      </button>
      <input
        type="range"
        aria-label="Zoom"
        defaultValue={50}
        className="h-2 w-[79px] appearance-none bg-[linear-gradient(#777,#777)] bg-size-[100%_1px] bg-center bg-no-repeat [&::-webkit-slider-thumb]:h-2 [&::-webkit-slider-thumb]:w-1.5 [&::-webkit-slider-thumb]:appearance-none [&::-webkit-slider-thumb]:rounded-b-sm [&::-webkit-slider-thumb]:border [&::-webkit-slider-thumb]:border-[#555] [&::-webkit-slider-thumb]:bg-[#eee]"
      />
      <button aria-label="Zoom in">
        <Icon size={12}><circle cx="8" cy="8" r="7" fill="#eee" stroke="#555" /><path d="M4 8h8M8 4v8" stroke="#222" strokeWidth="2" /></Icon>
      </button>
      <button aria-label="Record" className="mx-1.5"><Icon size={11}><circle cx="8" cy="8" r="7" fill="#d0252a" stroke="#666" /></Icon></button>
      <button aria-label="Upload" className="mr-0.5"><G name="up" /></button>
    </footer>
  );
}

function TaskButton({ label, open = false, children }: { label: string; open?: boolean; children: ReactNode }) {
  return (
    <button
      aria-label={label}
      className={`grid h-[27px] w-[41px] place-items-center rounded-xs border ${open ? "border-[#66788c] bg-linear-to-b from-[#dfe7f0] to-[#c6d3e3]" : "border-transparent"}`}
    >
      <svg width="22" height="22" viewBox="0 0 22 22">{children}</svg>
    </button>
  );
}

function TaskBar() {
  return (
    <footer className="flex h-7 shrink-0 items-center bg-[linear-gradient(90deg,#70777f_0,#7e868e_50px,#b0c3dc_90px,#b0c3dc_600px,#6d747c_626px,#6d747c_100%)] text-white">
      <button aria-label="Start" className="ml-1.5">
        <svg width="26" height="26" viewBox="0 0 26 26">
          <circle cx="13" cy="13" r="12" fill="#28668a" stroke="#1b3e55" />
          <ellipse cx="13" cy="8" rx="9" ry="6" fill="#8fc0d8" opacity=".7" />
          <path d="M7 9q3-2 5-1l-1 5q-3-1-5 0z" fill="#e8663c" />
          <path d="M13 8q3 2 6 1l-1 5q-3 1-6-1z" fill="#8cc63f" />
          <path d="M6 14q3-1 5 0l-1 5q-2-1-5 0z" fill="#4db0e8" />
          <path d="M12 14q3 2 6 1l-2 5q-3 1-5-1z" fill="#f7d04a" />
        </svg>
      </button>
      <span className="ml-2 h-5 w-1.5 border-x-2 border-dotted border-[#4d535a]" />
      <div className="ml-2 flex gap-0.5">
        <TaskButton label="Chrome">
          <circle cx="11" cy="11" r="10" fill="#e5c02b" />
          <path d="M2 6a10 10 0 0118 0l-9 1-4 5z" fill="#d93f33" />
          <path d="M2 6l6 8 3 7A10 10 0 012 6z" fill="#3b9c4a" />
          <circle cx="11" cy="11" r="4.5" fill="#4b86d8" stroke="#fff" />
        </TaskButton>
        <TaskButton label="Internet Explorer">
          <path d="M17 15a6.5 7 0 11.5-4H6" fill="none" stroke="#3aa3dd" strokeWidth="4" />
          <path d="M2 19Q-1 14 9 6T21 3q1 2-2 5 1-4-4-2T5 14t-3 5z" fill="#efc13c" />
        </TaskButton>
        <TaskButton label="Explorer" open>
          <path d="M1 4l5-3h12l3 4v14H1z" fill="#e9cf73" stroke="#b3913e" />
          <path d="M3 7h16v3H3z" fill="#fdf2c0" />
          <path d="M4 19v-4q0-2 3-2h8q3 0 3 2v4h-3v-3H7v3z" fill="#6fb6df" />
        </TaskButton>
        <TaskButton label="Outlook">
          <path d="M11 5h10v12H11z" fill="#fff" stroke="#1668b0" />
          <path d="M11 7l5 5 5-5" fill="none" stroke="#1668b0" />
          <path d="M0 3l12-2v20L0 19z" fill="#1460a8" />
          <ellipse cx="6" cy="11" rx="3" ry="3.5" fill="none" stroke="#fff" strokeWidth="2" />
        </TaskButton>
        <TaskButton label="Sticky Notes">
          <path d="M0 5l9-2 3 10-8 3z" fill="#b2dfb0" />
          <path d="M6 6h9v11H6z" fill="#a5d8ae" />
          <path d="M11 7l9-1 2 11-10 1z" fill="#f2df70" />
        </TaskButton>
        <TaskButton label="Solid Edge" open>
          <path d="M1 8l11 2-4 11z" fill="#3d8de0" />
          <path d="M11 9l11-5-4 8z" fill="#2472c4" />
          <path d="M1 7l11 2 9-4" fill="none" stroke="#9cc4ee" />
        </TaskButton>
        <TaskButton label="Recorder" open>
          <rect x="1" y="3" width="20" height="16" fill="#f5f5f5" stroke="#ccc" />
          <circle cx="8" cy="12" r="4" fill="#e36b28" />
          <path d="M11 5h2v5h-2z" fill="#e36b28" />
          <path d="M15 6h3v11h-3z" fill="#d9572a" />
        </TaskButton>
      </div>
      <div className="ml-auto flex items-center gap-[3px] text-[12px]">
        <span className="h-5 w-1.5 border-x-2 border-dotted border-[#4d535a]" />
        <Icon size={11}><path d="M1 8l4 5L15 2M8 13l6-4" stroke="#bcd69a" strokeWidth="2" /></Icon>
        <button className="text-[14px]">A</button>
        <button>漢</button>
        <button aria-label="Input help">
          <Icon size={11}>
            <circle cx="8" cy="8" r="7.5" fill="#26348f" />
            <path d="M5.5 6c0-4 5-3 5 0 0 2-2.5 2-2.5 4M8 11v2" stroke="#fff" strokeWidth="2" />
          </Icon>
        </button>
        <button aria-label="Language options" className="ml-1"><Icon size={10}><path d="M3 1h8v4H3zM4 11h8l-4 4z" stroke="#fff" strokeWidth="1.5" /></Icon></button>
        <button aria-label="Hidden icons"><Icon size={9}><path d="M3 10h10L8 5z" fill="#fff" /></Icon></button>
        <div className="ml-1 flex items-center gap-1.5">
          <Icon size={11}><rect width="16" height="16" rx="2" fill="#d3202a" /><path d="M3 10c0-8 10-8 10 0M8 5v7q-2 2-3 0" stroke="#fff" strokeWidth="2" /></Icon>
          <Icon size={11}><path d="M3 1v14M4 3h6v2h4v6H9V9H4z" fill="#fff" stroke="#fff" /></Icon>
          <Icon size={11}><path d="M3 4h6v10H3zM10 3v4M14 3v4M9 7h6v4h-3v4" stroke="#fff" strokeWidth="2" /></Icon>
          <Icon size={11}><path d="M1 14v-2M5 14v-4M9 14V7M13 14V3" stroke="#fff" strokeWidth="2.5" /></Icon>
          <Icon size={11}><path d="M2 6h3l4-4v12l-4-4H2zM12 5q2 3 0 6" fill="#fff" stroke="#fff" /></Icon>
          <Icon size={11}><ellipse cx="8" cy="7" rx="7" ry="5" fill="#eee" /><path d="M5 10v5l4-4z" fill="#eee" /></Icon>
        </div>
        <time className="mr-2 ml-3 text-center text-[9px] leading-[12px]">
          오후 7:26
          <br />
          2013-11-12
        </time>
        <button aria-label="Show desktop" className="h-7 w-2 border-l border-[#4f555c] bg-[#5f666e]" />
      </div>
    </footer>
  );
}

export default function App() {
  return (
    <div className="min-h-screen bg-black">
      <main className="mx-auto flex min-h-screen w-full max-w-[900px] flex-col overflow-hidden bg-[#ececec] font-['Open_Sans','Noto_Sans_CJK_KR',sans-serif]">
        <TitleBar />
        <Ribbon />
        <div className="flex flex-1">
          <LeftRail />
          <div className="flex min-w-0 flex-1 flex-col">
            <div className="flex flex-1 overflow-hidden border-t border-r border-[#777] bg-[#fdfdfd] pl-px">
              <PathFinder />
              <BallValve />
            </div>
            <PromptBar />
          </div>
          <RightRail />
        </div>
        <section aria-label="Animation Editor" className="flex h-[133px] shrink-0 flex-col border-r-2 border-[#ccc] bg-[#ececec] pb-px">
          <AnimationToolbar />
          <div className="flex flex-1 pr-1 pl-[5px]">
            <div className="mr-1 flex w-[139px] shrink-0 flex-col">
              <div className="flex h-[19px] items-end gap-1 pl-px">
                <ToolButton icon="props" label="Properties" />
                <ToolButton icon="film" label="Save as movie" />
                <ToolButton icon="camera" label="Camera path" />
                <ToolButton icon="inspect" label="Preview" />
              </div>
              <TrackList />
            </div>
            <Timeline />
          </div>
        </section>
        <StatusBar />
        <TaskBar />
      </main>
    </div>
  );
}
